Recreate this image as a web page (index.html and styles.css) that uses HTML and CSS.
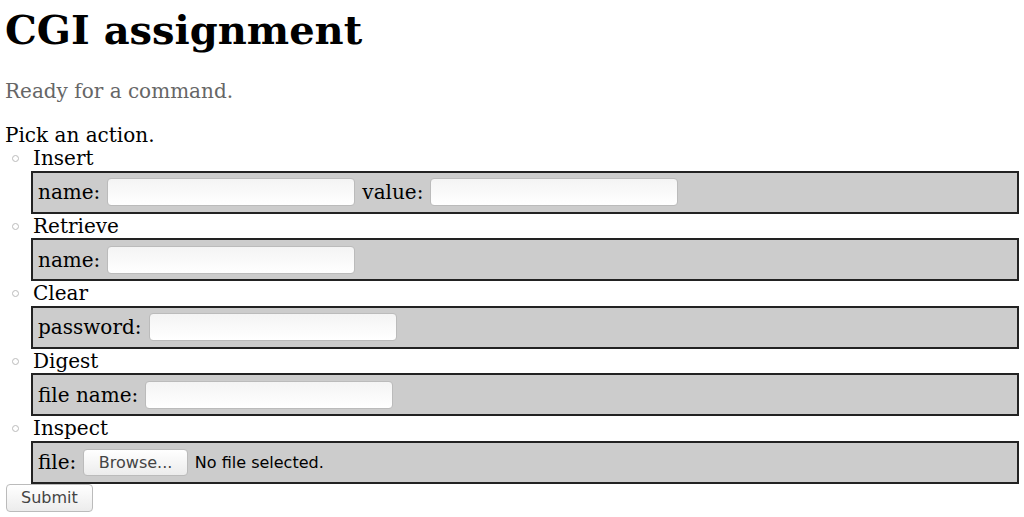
FILE: index.html
```html
<!DOCTYPE html>
<html lang="en">

<head>
    <meta charset="UTF-8">
    <title>CGI assignment</title>
    <link rel="stylesheet" href="styles.css">
</head>

<body>
    <h1>CGI assignment</h1>
    <p class="status">Ready for a command.</p>

    <form action="/cgi-bin/assignment.cgi" method="POST" enctype="multipart/form-data">
        <div class="prompt">Pick an action.</div>
        <ul class="actions">
            <li>
                <label>Insert</label>
                <div class="params">
                    <label for="ins-name">name:</label>
                    <input type="text" id="ins-name" name="insert_name">
                    <label for="ins-value">value:</label>
                    <input type="text" id="ins-value" name="insert_value">
                </div>
            </li>
            <li>
                <label>Retrieve</label>
                <div class="params">
                    <label for="ret-name">name:</label>
                    <input type="text" id="ret-name" name="retrieve_name">
                </div>
            </li>
            <li>
                <label>Clear</label>
                <div class="params">
                    <label for="clr-pass">password:</label>
                    <input type="password" id="clr-pass" name="password">
                </div>
            </li>
            <li>
                <label>Digest</label>
                <div class="params">
                    <label for="dig-file">file name:</label>
                    <input type="text" id="dig-file" name="digest_file">
                </div>
            </li>
            <li>
                <label>Inspect</label>
                <div class="params">
                    <label>file:</label>
                    <span class="browse">Browse...</span>
                    <span class="nofile">No file selected.</span>
                </div>
            </li>
        </ul>
        <button type="submit">Submit</button>
    </form>
</body>

</html>
```

FILE: styles.css
```css
body {
    margin: 5px;
    font-family: "DejaVu Serif", serif;
    font-size: 20px;
    color: #000;
}

h1 {
    font-size: 40px;
    margin: 0;
    line-height: 50px;
}

.status {
    color: #666;
    margin: 24px 0 20px;
    line-height: 24px;
}

.prompt {
    line-height: 24px;
}

.actions {
    list-style: none;
    margin: -1px 0 0;
    padding: 0;
}

.actions li {
    position: relative;
    padding-left: 26px;
}

.actions li > label {
    display: block;
    line-height: 24.5px;
    padding-left: 2px;
}

/* the small hollow bullet in front of each action */
.actions li::before {
    content: "";
    position: absolute;
    left: 7px;
    top: 9px;
    width: 5px;
    height: 5px;
    border: 1px solid #bbb;
    border-radius: 50%;
}

.params {
    background-color: #ccc;
    border: 2px solid #222;
    height: 39px;
    display: flex;
    align-items: center;
    padding: 0 5px;
    gap: 7px;
}

.params input {
    width: 248px;
    height: 28px;
    box-sizing: border-box;
    border: 1px solid #bbb;
    border-radius: 4px;
    background: linear-gradient(#f4f4f4, #fff);
    margin: 0;
}

.browse {
    font-family: "DejaVu Sans", sans-serif;
    font-size: 16px;
    color: #444;
    background: linear-gradient(#fff, #ececec);
    border: 1px solid #bbb;
    border-radius: 4px;
    padding: 3px 14.5px;
}

.nofile {
    font-family: "DejaVu Sans", sans-serif;
    font-size: 16px;
}

button {
    font-family: "DejaVu Sans", sans-serif;
    font-size: 16px;
    color: #444;
    background: linear-gradient(#fff, #ececec);
    border: 1px solid #bbb;
    border-radius: 4px;
    padding: 3px 14px;
    height: 28px;
    margin: 0 0 0 1px;
}
```
